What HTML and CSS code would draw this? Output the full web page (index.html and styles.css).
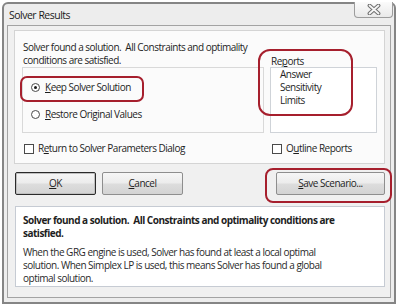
FILE: index.html
```html
<!DOCTYPE html>
<html>
<head>
<meta charset="utf-8">
<link rel="stylesheet" href="styles.css">
</head>
<body>
<div class="window">
  <div class="titlebar">
    <span class="title">Solver Results</span>
    <div class="close">
      <svg width="14" height="11" viewBox="0 0 14 11">
        <path d="M2.5 1.5 L11.5 9.5 M11.5 1.5 L2.5 9.5" stroke="#6e6e6e" stroke-width="3.8" stroke-linecap="round" fill="none"/>
        <path d="M2.5 1.5 L11.5 9.5 M11.5 1.5 L2.5 9.5" stroke="#f6f6f6" stroke-width="1.8" stroke-linecap="round" fill="none"/>
      </svg>
    </div>
  </div>
  <div class="client">
    <div class="panel">
      <p class="msg">Solver found a solution.&nbsp; All Constraints and optimality<br>conditions are satisfied.</p>
      <div class="reports-label">Re<u>p</u>orts</div>
      <div class="groupbox">
        <div class="opt"><span class="radio on"></span><span><u>K</u>eep Solver Solution</span></div>
        <div class="opt"><span class="radio"></span><span><u>R</u>estore Original Values</span></div>
      </div>
      <ul class="listbox">
        <li>Answer</li>
        <li>Sensitivity</li>
        <li>Limits</li>
      </ul>
      <div class="check"><span class="box"></span><span>R<u>e</u>turn to Solver Parameters Dialog</span></div>
      <div class="check"><span class="box"></span><span>O<u>u</u>tline Reports</span></div>
    </div>
    <div class="buttons">
      <div class="btn default"><u>O</u>K</div>
      <div class="btn"><u>C</u>ancel</div>
      <div class="btn wide"><u>S</u>ave Scenario...</div>
    </div>
    <div class="info">
      <p class="bold">Solver found a solution.&nbsp; All Constraints and optimality conditions are<br>satisfied.</p>
      <p class="desc">When the GRG engine is used, Solver has found at least a local optimal<br>solution. When Simplex LP is used, this means Solver has found a global<br>optimal solution.</p>
    </div>
  </div>
  <div class="mark mark-keep"></div>
  <div class="mark mark-reports"></div>
  <div class="mark mark-save"></div>
</div>
</body>
</html>
```

FILE: styles.css
```css
* { box-sizing: border-box; }
html, body { margin: 0; padding: 0; background: #ffffff; }
body {
  font-family: "Open Sans", "Noto Sans", sans-serif;
  font-size: 10px;
  letter-spacing: -0.5px;
  color: #1e1e1e;
}
p { margin: 0; }
u { text-decoration: underline; text-underline-offset: 1px; }

.window {
  position: relative;
  margin: 2px 0 0 2px;
  width: 394px;
  height: 302px;
  border: 2px solid #858585;
  border-radius: 6px 6px 0 0;
  background: #ededed;
  display: flex;
  flex-direction: column;
}

.titlebar {
  height: 21px;
  display: flex;
  align-items: center;
  padding-left: 5px;
}
.title {
  font-size: 10.5px;
  line-height: 13px;
  padding-top: 1px;
  color: #1a1a1a;
}
.close {
  margin-left: auto;
  margin-right: 1px;
  align-self: flex-start;
  margin-top: -2px;
  width: 39px;
  height: 16px;
  border: 1px solid #9c9c9c;
  border-top: none;
  border-radius: 0 0 4px 4px;
  background: linear-gradient(#fbfbfb, #e9e9e9);
  display: flex;
  align-items: center;
  justify-content: center;
}

.client {
  margin: 0 3px 4px 3px;
  flex: 1;
  border: 1px solid #a3a3a3;
  background: #f0f0f0;
  padding: 4px 5px 0 6px;
  display: flex;
  flex-direction: column;
}

.panel {
  height: 134px;
  border: 1px solid #d4d4d4;
  background: #fbfbfb;
  display: grid;
  grid-template-columns: 242px 107px;
  grid-template-rows: auto auto auto;
  align-content: start;
  column-gap: 6px;
  padding: 10px 0 0 7px;
  line-height: 13px;
}
.msg {
  grid-column: 1 / 3;
  grid-row: 1;
  padding-left: 1px;
}
.reports-label {
  grid-column: 2;
  grid-row: 1;
  align-self: end;
  padding-left: 1px;
  margin-bottom: -1px;
}
.groupbox {
  grid-column: 1;
  grid-row: 2;
  margin-top: 0;
  height: 66px;
  border: 1px solid #d9d9d9;
  padding: 13px 0 0 8px;
  display: flex;
  flex-direction: column;
  gap: 14px;
}
.opt {
  display: flex;
  align-items: center;
  gap: 5px;
}
.radio {
  width: 9px;
  height: 9px;
  border: 1px solid #4a4a4a;
  border-radius: 50%;
  background: #ffffff;
  display: flex;
  align-items: center;
  justify-content: center;
}
.radio.on::after {
  content: "";
  width: 3px;
  height: 3px;
  border-radius: 50%;
  background: #1a1a1a;
}
.listbox {
  grid-column: 2;
  grid-row: 2;
  margin: 0;
  list-style: none;
  height: 66px;
  border: 1px solid #cfd3d8;
  background: #ffffff;
  padding: 0 0 0 9px;
  line-height: 13px;
}
.check {
  grid-row: 3;
  margin-top: 9px;
  padding-left: 2px;
  display: flex;
  align-items: center;
  gap: 4px;
}
.check:last-child { grid-column: 2; }
.box {
  width: 10px;
  height: 10px;
  border: 1px solid #4a4a4a;
  background: #ffffff;
}

.buttons {
  margin-top: 8px;
  display: flex;
  gap: 6px;
  padding-left: 1px;
}
.btn {
  width: 81px;
  height: 23px;
  border: 1px solid #8e8e8e;
  border-radius: 2px;
  background: linear-gradient(#f6f6f6 0%, #ececec 48%, #dddddd 52%, #d3d3d3 100%);
  display: flex;
  align-items: center;
  justify-content: center;
  line-height: 13px;
}
.btn.default {
  border: 1px solid #2a2a2a;
  box-shadow: inset 0 0 0 1px #bfbfbf;
}
.btn.wide {
  width: 109px;
  margin-left: auto;
}

.info {
  margin-top: 11px;
  margin-left: 1px;
  height: 81px;
  border: 1px solid #c6cbd3;
  background: #ffffff;
  padding: 7px 0 0 7px;
  line-height: 13px;
}
.info .bold { font-weight: 700; letter-spacing: -0.5px; }
.info .desc { margin-top: 6px; color: #2a2a2a; }

.mark {
  position: absolute;
  border: 2px solid #a61f2d;
}
.mark-keep {
  left: 16px;
  top: 72px;
  width: 124px;
  height: 26px;
  border-radius: 7px;
}
.mark-reports {
  left: 254px;
  top: 45px;
  width: 95px;
  height: 67px;
  border-radius: 12px;
}
.mark-save {
  left: 261px;
  top: 164px;
  width: 127px;
  height: 35px;
  border-radius: 8px;
}
```
